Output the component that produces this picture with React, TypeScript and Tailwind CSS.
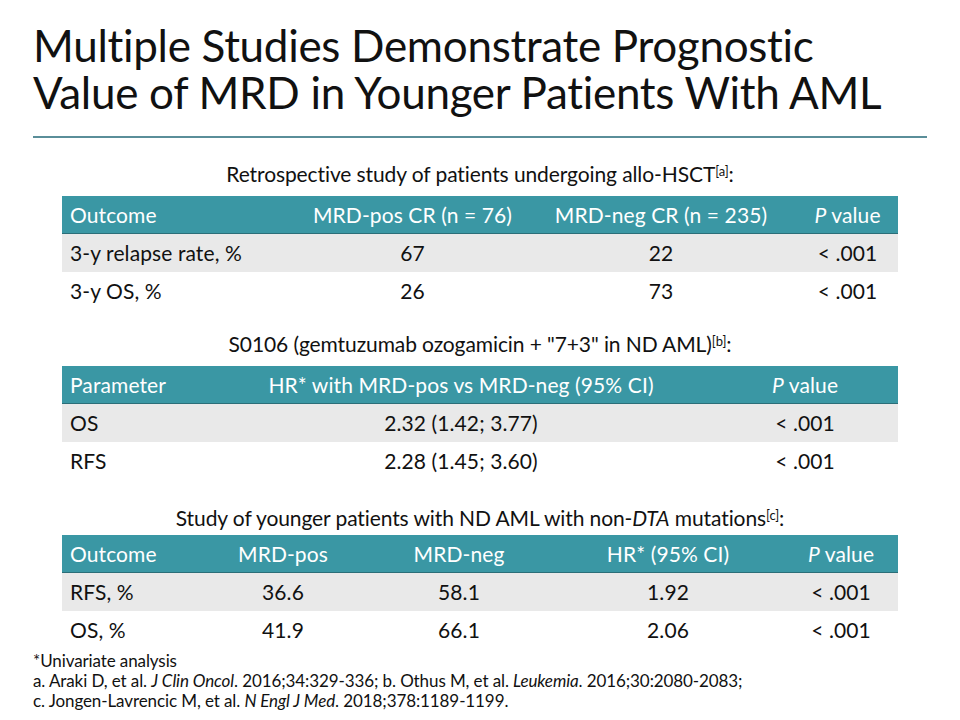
import React from "react";

const font = { fontFamily: "Lato, 'Open Sans', sans-serif" };

function Caption({ children }: { children: React.ReactNode }) {
  return (
    <p className="text-center text-[21px] leading-[24px] tracking-[-0.1px] text-[#111]">
      {children}
    </p>
  );
}

function Sup({ children }: { children: React.ReactNode }) {
  return <span className="text-[13px] align-[6px] leading-none">{children}</span>;
}

type Cell = React.ReactNode;

function Table({ cols, head, rows }: { cols: string; head: Cell[]; rows: Cell[][] }) {
  return (
    <div className="mx-[62px] text-[21px] tracking-[0.1px]">
      <div className={`grid ${cols} h-[38px] items-center bg-[#3a97a4] border-b border-[#2b6e78] text-white`}>
        {head.map((h, i) => (
          <div key={i} className={i === 0 ? "pl-2" : "text-center"}>
            {h}
          </div>
        ))}
      </div>
      {rows.map((r, ri) => (
        <div
          key={ri}
          className={`grid ${cols} h-[38px] items-center text-[#111] ${ri === 0 ? "bg-[#e9e9e9]" : "bg-white"}`}
        >
          {r.map((c, i) => (
            <div key={i} className={i === 0 ? "pl-2" : "text-center"}>
              {c}
            </div>
          ))}
        </div>
      ))}
    </div>
  );
}

const pValue = (
  <>
    <i>P</i> value
  </>
);

export default function App() {
  return (
    <div className="w-[960px] h-[720px] bg-white overflow-hidden" style={font}>
      <div className="px-[33px] pt-[22px]">
        <h1 className="text-[44px] leading-[47px] tracking-[-0.3px] text-[#111] font-normal">
          Multiple Studies Demonstrate Prognostic
          <br />
          Value of MRD in Younger Patients With AML
        </h1>
        <div className="mt-[20px] h-[2px] bg-[#5a8e99]" />
      </div>

      <div className="mt-[24px]">
        <Caption>
          Retrospective study of patients undergoing allo-HSCT<Sup>[a]</Sup>:
        </Caption>
      </div>
      <div className="mt-[10px]">
        <Table
          cols="grid-cols-[238px_225px_272px_1fr]"
          head={["Outcome", "MRD-pos CR (n = 76)", "MRD-neg CR (n = 235)", pValue]}
          rows={[
            ["3-y relapse rate, %", "67", "22", "< .001"],
            ["3-y OS, %", "26", "73", "< .001"],
          ]}
        />
      </div>

      <div className="mt-[22px]">
        <Caption>
          S0106 (gemtuzumab ozogamicin + "7+3" in ND AML)<Sup>[b]</Sup>:
        </Caption>
      </div>
      <div className="mt-[10px]">
        <Table
          cols="grid-cols-[148px_502px_1fr]"
          head={["Parameter", "HR* with MRD-pos vs MRD-neg (95% CI)", pValue]}
          rows={[
            ["OS", "2.32 (1.42; 3.77)", "< .001"],
            ["RFS", "2.28 (1.45; 3.60)", "< .001"],
          ]}
        />
      </div>

      <div className="mt-[26px]">
        <Caption>
          Study of younger patients with ND AML with non-<i>DTA</i> mutations<Sup>[c]</Sup>:
        </Caption>
      </div>
      <div className="mt-[5px]">
        <Table
          cols="grid-cols-[138px_166px_186px_232px_1fr]"
          head={["Outcome", "MRD-pos", "MRD-neg", "HR* (95% CI)", pValue]}
          rows={[
            ["RFS, %", "36.6", "58.1", "1.92", "< .001"],
            ["OS, %", "41.9", "66.1", "2.06", "< .001"],
          ]}
        />
      </div>

      <div className="px-[33px] mt-[2px] text-[17px] leading-[20px] tracking-[-0.1px] text-[#111]">
        <p>*Univariate analysis</p>
        <p>
          a. Araki D, et al. <i>J Clin Oncol</i>. 2016;34:329-336; b. Othus M, et al. <i>Leukemia</i>.
          2016;30:2080-2083;
        </p>
        <p>
          c. Jongen-Lavrencic M, et al. <i>N Engl J Med</i>. 2018;378:1189-1199.
        </p>
      </div>
    </div>
  );
}
